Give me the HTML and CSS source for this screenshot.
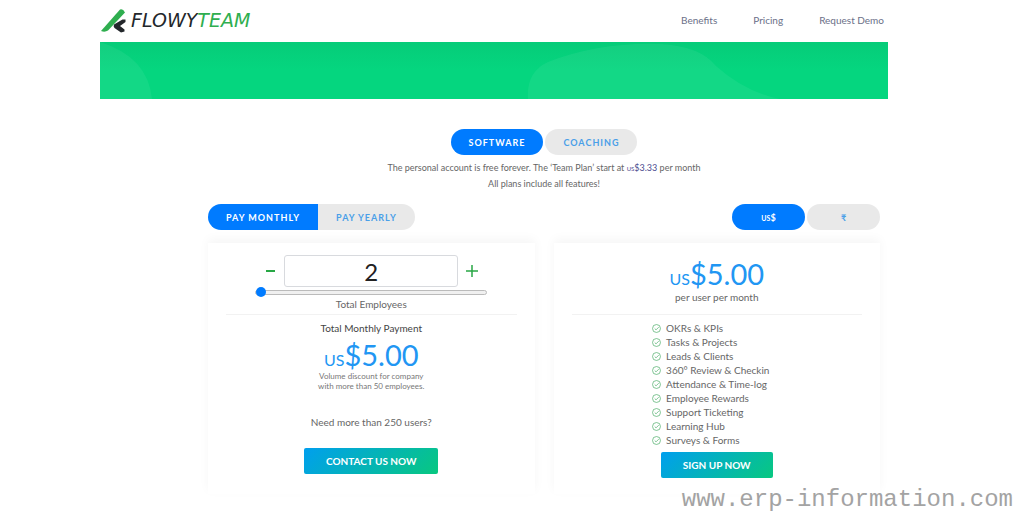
FILE: index.html
```html
<!DOCTYPE html>
<html lang="en">
<head>
    <meta charset="UTF-8">
    <meta name="viewport" content="width=device-width, initial-scale=1.0">
    <title>FlowyTeam Pricing</title>
    <link rel="stylesheet" href="styles.css">
</head>
<body>
    <header class="header">
        <a class="logo" href="#" aria-label="FlowyTeam">
            <svg class="logo-mark" viewBox="0 0 27 25" aria-hidden="true">
                <path d="M1 23 20 1.500Q23 .5 25 4.500L8 22.500Q5 24.500 1 23z" fill="#2fae4f"/>
                <path d="M22.500 11.500 14 16.500Q13 18 14.500 20L21 24.500 24.500 23.500V21.500L20 18 25.500 14V11.500z" fill="#23272b"/>
            </svg>
            <span class="logo-text">FLOWY<span class="logo-team">TEAM</span></span>
        </a>
        <nav class="nav">
            <a href="#">Benefits</a>
            <a href="#">Pricing</a>
            <a href="#">Request Demo</a>
        </nav>
    </header>
    <div class="banner">
        <svg viewBox="0 0 788 57" preserveAspectRatio="none" aria-hidden="true">
            <path d="M0 0Q48 15 52 57H0zM428 57Q426 30 448 20 500 0 560 2 600 4 616 24 645 50 680 57z" fill="#fff" fill-opacity=".06"/>
        </svg>
    </div>

    <main class="pricing">
        <div class="tabs">
            <button class="pill active">SOFTWARE</button>
            <button class="pill">COACHING</button>
        </div>
        <p class="intro">The personal account is free forever. The ‘Team Plan’ start at <span class="from"><small>US</small>$3.33</span> per month</p>
        <p class="intro">All plans include all features!</p>

        <div class="toggles">
            <div class="period">
                <button class="pill active">PAY MONTHLY</button>
                <button class="pill">PAY YEARLY</button>
            </div>
            <div class="currency">
                <button class="pill active"><small>US</small>$</button>
                <button class="pill">₹</button>
            </div>
        </div>

        <div class="cards">
            <section class="card">
                <div class="counter">
                    <button class="step" id="minus" aria-label="Remove employee">
                        <svg viewBox="0 0 12 12"><path d="M2 6h9" stroke-width="2"/></svg>
                    </button>
                    <input class="count" id="count" type="text" value="2" aria-label="Number of employees">
                    <button class="step" id="plus" aria-label="Add employee">
                        <svg viewBox="0 0 12 12"><path d="M0 6h12M6 0v12" stroke-width="1.500"/></svg>
                    </button>
                </div>
                <input class="slider" id="employees" type="range" min="2" max="250" value="2">
                <label class="label" for="employees">Total Employees</label>
                <hr>
                <h2 class="payment">Total Monthly Payment</h2>
                <div class="price"><small>US</small>$5.00</div>
                <p class="discount">Volume discount for company<br>with more than 50 employees.</p>
                <p class="more">Need more than 250 users?</p>
                <button class="action">CONTACT US NOW</button>
            </section>

            <section class="card plan">
                <div class="price"><small>US</small>$5.00</div>
                <p class="label">per user per month</p>
                <hr>
                <ul class="features">
                    <li>OKRs &amp; KPIs</li>
                    <li>Tasks &amp; Projects</li>
                    <li>Leads &amp; Clients</li>
                    <li>360° Review &amp; Checkin</li>
                    <li>Attendance &amp; Time-log</li>
                    <li>Employee Rewards</li>
                    <li>Support Ticketing</li>
                    <li>Learning Hub</li>
                    <li>Surveys &amp; Forms</li>
                </ul>
                <button class="action signup">SIGN UP NOW</button>
            </section>
        </div>
    </main>
    <div class="watermark">www.erp-information.com</div>

    <script src="script.js"></script>
</body>
</html>
```
FILE: styles.css
```css
* {
    box-sizing: border-box;
}
body {
    margin: 0;
    position: relative;
    min-height: 100vh;
    background: #fff;
    color: #666;
    font-family: Lato, "Noto Sans", sans-serif;
    font-size: 10px;
    line-height: 16px;
}
p, h2, ul {
    margin: 0;
    padding: 0;
}
small {
    line-height: 1;
}
button {
    font-family: inherit;
    border: none;
    cursor: pointer;
}
.header {
    display: flex;
    align-items: center;
    justify-content: space-between;
    height: 42px;
    margin: 0 140px 0 100px;
    padding-bottom: 2px;
}
.logo {
    display: flex;
    align-items: center;
    gap: 4px;
    text-decoration: none;
}
.logo-mark {
    width: 27px;
    height: 25px;
}
.logo-text {
    color: #23272b;
    font-family: "DejaVu Sans", sans-serif;
    font-size: 19px;
    font-style: italic;
}
.logo-team {
    color: #2fae4f;
}
.nav {
    display: flex;
    gap: 36px;
}
.nav a {
    color: #6b7088;
    font-size: 10px;
    text-decoration: none;
}
.banner {
    height: 57px;
    margin: 0 136px 0 100px;
    background: linear-gradient(#06cc79, #05d67f 50%);
}
.banner svg {
    display: block;
    width: 100%;
    height: 100%;
}
.pricing {
    padding: 30px 144px 0 208px;
}
.tabs {
    display: flex;
    justify-content: center;
    gap: 2px;
    margin-bottom: 5px;
}
.pill {
    height: 26px;
    padding: 0 18px;
    border-radius: 13px;
    background: #e9e9e9;
    color: #4a9fe8;
    font-size: 9px;
    font-weight: 700;
    letter-spacing: 1px;
}
.pill.active {
    background: #007bff;
    color: #fff;
}
.intro {
    font-size: 9px;
    text-align: center;
}
.from {
    color: #4b4b8f;
}
.from small {
    font-size: 6px;
}
.toggles {
    display: flex;
    justify-content: space-between;
    margin: 12px 0 13px;
}
.period {
    display: flex;
}
.period .pill:first-child {
    border-radius: 13px 0 0 13px;
}
.period .pill:last-child {
    border-radius: 0 13px 13px 0;
}
.currency {
    display: flex;
    gap: 2px;
}
.currency .pill {
    width: 73px;
    letter-spacing: 0;
}
.currency small {
    font-size: 7px;
}
.cards {
    display: grid;
    grid-template-columns: 1fr 1fr;
    gap: 19px;
}
.card {
    display: flex;
    flex-direction: column;
    align-items: center;
    padding: 12px 18px 16px;
    box-shadow: 0 -4px 10px rgba(0, 0, 0, .04);
    text-align: center;
}
.counter {
    display: flex;
    align-items: center;
    gap: 8px;
}
.step {
    display: flex;
    padding: 0;
    background: none;
}
.step svg {
    width: 12px;
    height: 12px;
    fill: none;
    stroke: #28a745;
}
.count {
    width: 174px;
    height: 32px;
    border: 1px solid #d8dade;
    border-radius: 3px;
    color: #222;
    font-family: inherit;
    font-size: 24px;
    text-align: center;
}
.slider {
    appearance: none;
    width: 232px;
    height: 10px;
    margin: 0;
    background: none;
}
.slider::-webkit-slider-runnable-track {
    height: 5px;
    border: 1px solid #bbb;
    border-radius: 3px;
    background: #f0f0f0;
}
.slider::-webkit-slider-thumb {
    appearance: none;
    width: 10px;
    height: 10px;
    margin-top: -4px;
    border-radius: 50%;
    background: #007bff;
}
.label {
    line-height: 14px;
}
hr {
    width: 100%;
    margin: 3px 0 5px;
    border: none;
    border-top: 1px solid #f2f2f2;
}
.payment {
    font-size: 10px;
    font-weight: 400;
    color: #444;
}
.price {
    margin-top: 3px;
    color: #2196f3;
    font-size: 29px;
    line-height: 32px;
}
.price small {
    font-size: 16px;
}
.discount {
    color: #777;
    font-size: 8px;
    line-height: 10px;
}
.more {
    margin: 23px 0 18px;
    font-size: 10px;
}
.action {
    width: 134px;
    height: 26px;
    border-radius: 2px;
    background: linear-gradient(135deg, #009fee, #08c880);
    color: #fff;
    font-size: 10px;
    font-weight: 700;
}
.plan {
    padding-top: 12px;
}
.plan hr {
    margin: 10px 0 6px;
}
.features {
    padding-right: 12px;
    list-style: none;
    text-align: left;
    line-height: 14px;
}
.features li {
    display: flex;
    align-items: center;
    gap: 5px;
}
.features svg {
    width: 9px;
    height: 9px;
    fill: none;
    stroke: #4fae6b;
    stroke-width: .8;
}
.signup {
    width: 112px;
    margin-top: 5px;
}
.watermark {
    position: absolute;
    right: 11px;
    bottom: 0;
    color: #a3a3a3;
    font-family: "Liberation Mono", monospace;
    font-size: 24px;
    line-height: 24px;
}
```
FILE: script.js
```js
const count = document.getElementById("count");
const slider = document.getElementById("employees");

function setCount(value) {
    slider.value = value;
    count.value = slider.value;
}

slider.oninput = () => setCount(slider.value);
count.onchange = () => setCount(count.value);
document.getElementById("minus").onclick = () => setCount(Number(slider.value) - 1);
document.getElementById("plus").onclick = () => setCount(Number(slider.value) + 1);

// tick in front of each feature
document.querySelectorAll(".features li").forEach(item => {
    item.insertAdjacentHTML("afterbegin", '<svg viewBox="0 0 10 10"><circle cx="5" cy="5" r="4.400"/><path d="M3 5l1.500 1.500L7.500 3.500"/></svg>');
});
```
